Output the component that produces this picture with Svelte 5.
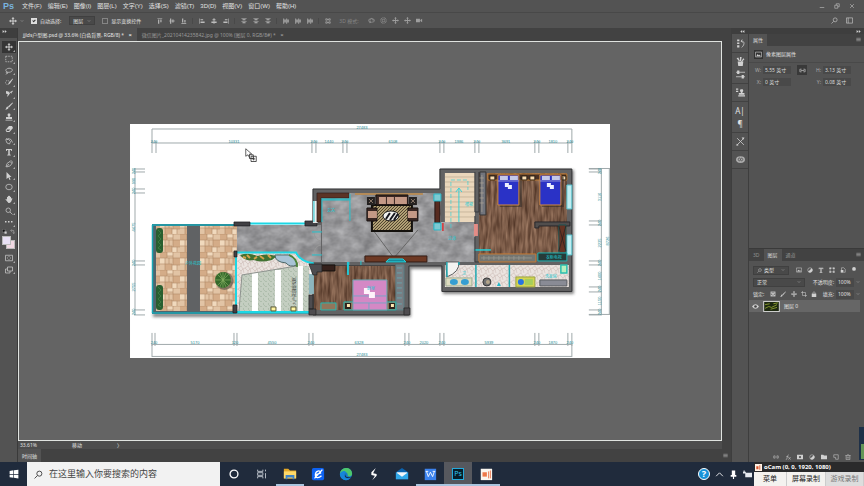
<script lang="ts">
	const menus = ['文件(F)', '编辑(E)', '图像(I)', '图层(L)', '文字(Y)', '选择(S)', '滤镜(T)', '3D(D)', '视图(V)', '窗口(W)', '帮助(H)'];

	// every icon is drawn on a 16 x 16 grid
	const icons: Record<string, string> = {
		move: '<path class="f" d="M8 0l3 3.500H9V7h3.500V5L16 8l-3.500 3V9H9v3.500h2L8 16l-3-3.500h2V9H3.500v2L0 8l3.500-3v2H7V3.500H5z"/>',
		marquee: '<path class="s" stroke-dasharray="3 2" d="M1.500 2.500h13v11h-13z"/>',
		lasso: '<path class="s" d="M4 10C0 8 1 3 8 2.500c7 0 8 4 5 6.500-3 2-7 2-9 1-2 0-2 3 0 3s2-2 0-3M4 13l-2 2"/>',
		quick: '<circle class="s" cx="5" cy="9" r="4" stroke-dasharray="2 1.500"/><path class="f" d="M15 1l1 1-6 9-3 2 0-3z"/>',
		dropper: '<path class="f" d="M2 2l5 1 2 3-3 3-4-2zM15 1c1 2 0 3-2 4l1 1-1 1-2-2-4 6-3 3 1-4 5-5-1-1 1-1 1 1z"/>',
		brush: '<path class="f" d="M15 1l1 1-8 9-2-2zM5 9l2 2c0 3-3 4-7 4 3-1 2-5 5-6z"/>',
		stamp: '<path class="f" d="M6 1h4l1 3-2 4h5v4H2V8h5L5 4zM1 13.500h14V15H1z"/>',
		eraser: '<path class="f" fill-rule="evenodd" d="M8 2h6l2 4-7 8H3l-2-4zM3 10l1 2h4l2-3H4z"/>',
		mixer: '<path class="s" d="M2 4l5 1 4 4-2 5-5-2-2-5zM6 3l6 2 3 6M3 2l3 4"/>',
		type: '<path class="f" d="M2 2h12v4h-1.500L12 4H9.500v9l2 .5V15h-7v-1.500l2-.5V4H4l-.5 2H2z"/>',
		pen: '<path class="s" stroke-width="2" d="M2 14l2-7 6-4 4 4-4 5-7 2 5-6M10 3l2-2 3 3-2 3"/>',
		select: '<path class="f" d="M3 0l10 10H9l2 5-2 1-2-5-4 3z"/>',
		ellipse: '<ellipse class="s" cx="8" cy="8" rx="6.500" ry="5.500"/>',
		hand: '<path class="f" d="M4 9V4q1-1 2 0V2q1-1 2 0v0q1-1 2 0v2q2-1 2 0v3q2-1 3 0l-3 7-3 2H7L1 9q0-2 3 0z"/>',
		zoom: '<circle class="s" cx="6.500" cy="6.500" r="4.500"/><path class="s" stroke-width="2.500" d="M10 10l5 5"/>',
		dots: '<path class="f" d="M0 6h3v3H0zM6 6h3v3H6zM12 6h3v3h-3z"/>',
		mask: '<path class="s" d="M1 2.500h14v11H1z"/><circle class="s" stroke-dasharray="1 1" cx="8" cy="8" r="3"/>',
		screen: '<path class="s" d="M5 2h10v8H5zM5 6H1v8h9v-4"/>',
		alignTop: '<path class="f" d="M1 1h13v1.500H1zM3 4h3v11H3zM9 4h3v7H9z"/>',
		alignMid: '<path class="f" d="M0 7h16v1.500H0zM3 1h3v14H3zM9 4h3v8H9z"/>',
		alignEnd: '<path class="f" d="M1 13.500h13V15H1zM3 1h3v11H3zM9 5h3v7H9z"/>',
		alignLeft: '<path class="f" d="M1 1h1.500v14H1zM4 3h7v3H4zM4 9h11v4H4z"/>',
		alignCol: '<path class="f" d="M7 0h2v16H7zM4 3h8v3H4zM1 9h14v4H1z"/>',
		alignRight: '<path class="f" d="M13.500 1H15v14h-1.500zM5 3h7v3H5zM1 9h11v4H1z"/>',
		distTop: '<path class="f" d="M1 1h14v1.500H1zM4 3h8v3H4zM1 9h14v1.500H1zM4 11h8v3H4z"/>',
		distCol: '<path class="f" d="M1 1h2v14H1zM4 4h3v8H4zM9 1h2v14H9zM12 4h3v8h-3z"/>',
		autoAlign: '<path class="s" stroke-width="2" d="M2 2h4v4H2zM10 2h4v4h-4zM2 10h4v4H2zM10 10h4v4h-4zM6 4h4M6 12h4"/>',
		orbit: '<ellipse class="s" cx="8" cy="8" rx="7" ry="4"/><path class="s" d="M5 12c-3-10 7-12 7-3M3 13l4-1"/>',
		roll: '<circle class="s" cx="8" cy="8" r="6.500" stroke-dasharray="8 2"/><circle class="s" cx="8" cy="8" r="3"/>',
		camera: '<path class="f" d="M0 4h9v8H0zM10 7l4-3v8l-4-3z"/>',
		frame: '<path class="s" d="M1 2h14v12H1zM5 2v12"/>',
		picture: '<path class="s" d="M1 2.500h14v11H1z"/><path class="f" d="M3 12l3-5 3 3 2-2 2 4z"/>',
		history: '<path class="f" d="M2 1h4v3H2zM2 6h4v3H2zM2 11h4v4H2z"/><path class="s" stroke-width="2" d="M9 4h3c4 2 2 8-2 11M11 1L9 4l3 2"/>',
		brushes: '<path class="f" d="M3 8h10l-1 8H4zM1 2l3-1 3 6H5zM7 0h3l-1 7H7zM13 2l2 2-4 4H9z"/>',
		sliders: '<path class="s" stroke-width="2" d="M0 4h16M0 12h16"/><path class="f" d="M2 1h4v6H2zM10 9h4v6h-4z"/>',
		cloneSrc: '<path class="f" d="M0 1h4v2H0zM0 5h4v2H0zM8 2h4l1 3-2 4h4v3H5V9h4L7 5zM4 13h12v2H4z"/>',
		cross: '<path class="s" stroke-width="2.500" d="M2 2l12 12M14 2L2 14"/><path class="f" d="M10 1l5 0-2 4zM1 12l4 2-4 2z"/>',
		cloud: '<ellipse class="f" cx="8" cy="8" rx="8" ry="6" opacity=".7"/><path d="M4 8c0-4 4-3 4 0s4 3 4 0-4-3-4 0-4 3-4 0z" fill="none" stroke="#555" stroke-width="1.500"/>',
		link: '<path class="s" stroke-width="2" d="M6 5H2v6h4M10 5h4v6h-4M4 8h8"/>',
		half: '<circle class="s" cx="8" cy="8" r="6"/><path class="f" d="M12.500 3A6.500 6.500 0 013 12.500z"/>',
		shape: '<path class="s" d="M3 3h10v10H3z"/><path class="f" d="M1 1h4v4H1zM11 1h4v4h-4zM1 11h4v4H1zM11 11h4v4h-4z"/>',
		smart: '<path class="s" stroke-width="2" d="M4 8V2h6l4 4v8H9"/><path class="f" d="M2 8h7v7H2z"/>',
		dot: '<circle class="f" cx="8" cy="5" r="5"/>',
		checker: '<path class="s" d="M2 2h12v12H2z"/><path class="f" d="M3 3h4v4H3zM9 3h4v4H9zM6 6h4v4H6zM3 10h4v3H3zM9 10h4v3H9z"/>',
		crop: '<path class="s" d="M4 0v12h12M0 4h12v12"/>',
		lock: '<path class="s" stroke-width="2" d="M5 8V4q3-4 6 0v4"/><path class="f" d="M2 7h12v9H2z"/>',
		eye: '<path class="f" d="M0 8q8-10 16 0-8 10-16 0z"/><circle cx="8" cy="8" r="3" fill="#444"/>',
		fx: '<path class="s" stroke-width="2" d="M2 15q3 1 4-6t4-7M3 7h6M9 8l6 7M15 8l-6 7"/>',
		maskAdd: '<path class="f" fill-rule="evenodd" d="M0 2h16v12H0zM8 5a3 3 0 100 6 3 3 0 000-6z"/>',
		folder: '<path class="f" d="M0 2h6l2 2h8v10H0z"/>',
		fresh: '<path class="s" d="M2 2h12v12H7V9H2z"/>',
		trash: '<path class="s" d="M1 4h14M3 4v11h10V4M6 1h4M6 7v5M10 7v5"/>',
		swap: '<path class="s" stroke-width="2" d="M3 5h9v8M6 1L2 5l4 4M9 11l3 4 3-4"/>',
		swatches: '<path d="M1 1h9v9H1z" fill="#111" stroke="#ccc"/><path class="f" d="M8 8h7v7H8z"/>',
		chevron: '<path class="s" stroke-width="2" d="M3 5l5 5 5-5"/>',
		menu: '<path class="s" d="M1 4h14M1 8h14M1 12h14"/>',
		rewind: '<path class="f" d="M7 3v10L1 8zM14 3v10L8 8z"/>',
		forward: '<path class="f" d="M2 3l6 5-6 5zM9 3l6 5-6 5z"/>'
	};

	const tools = [
		['移动', 'move'], ['选框', 'marquee'], ['套索', 'lasso'], ['快速选择', 'quick'], ['吸管', 'dropper'], ['画笔', 'brush'],
		['图章', 'stamp'], ['橡皮擦', 'eraser'], ['混合', 'mixer'], ['文字', 'type'], ['钢笔', 'pen'], ['路径选择', 'select'],
		['椭圆', 'ellipse'], ['抓手', 'hand'], ['缩放', 'zoom'], ['更多', 'dots']
	];
	const alignGroups = [
		['alignTop', 'alignMid', 'alignEnd'],
		['alignLeft', 'alignCol', 'alignRight'],
		['distTop', 'distTop', 'distTop'],
		['distCol', 'distCol', 'distCol'],
		['autoAlign']
	];
	const modes = ['orbit', 'roll', 'move', 'move', 'camera'];
	const dock = [['history'], ['brushes', 'sliders'], ['cloneSrc'], ['A|', '¶'], ['cross'], ['cloud']];
	const filters = ['picture', 'half', 'type', 'shape', 'smart', 'dot'];
	const locks = ['checker', 'brush', 'move', 'crop', 'lock'];
	const layerActions = ['link', 'fx', 'maskAdd', 'half', 'folder', 'fresh', 'trash'];

	const apps = [
		{ name: 'Cortana', art: '<circle cx="8" cy="8" r="4.500" fill="none" stroke="#fff" stroke-width="1.500"/>' },
		{ name: '任务视图', art: '<path fill="none" stroke="#c5cbd3" d="M3 3v2h6V3M3 13v-2h6v2M3 6.500h6v3H3zM12 3v2M12 7v6"/>' },
		{ name: '文件资源管理器', open: true, art: '<path fill="#e4a827" d="M1 2h5l2 2h7v9H1z"/><path fill="#ffd968" d="M1 5h14v8H1z"/><path fill="#3f83c6" d="M3 9h10v5h-2v-2H5v2H3z"/>' },
		{ name: '浏览器', art: '<rect x="1" y="1" width="14" height="14" rx="2" fill="#0d62f2"/><path d="M5 9l6-2c0-4-6-3-6 2 0 4 4 4 7 1M4 13l9-10" fill="none" stroke="#fff" stroke-width="1.500"/>' },
		{ name: 'Edge', art: '<circle cx="8" cy="8" r="7" fill="#1679ca"/><path d="M1 8C2-1 15-1 15 8c0 4-6 3-5 1C10 5 3 4 1 8z" fill="#4cc66c"/><path d="M1 8c2-4 6-4 7-2-4 2-2 8 4 8C6 17 1 13 1 8z" fill="#1686d9"/><path d="M8 8c-2 2 1 5 6 3-4 4-10 0-6-3z" fill="#182b48"/>' },
		{ name: '剪映', art: '<path fill="#fff" d="M10 1L5 6l0 3 4 1-3 5 5-5V8L7 7z"/>' },
		{ name: '邮件', art: '<path d="M1 6l7-5 7 5v8H1z" fill="#0b63ae"/><path d="M2 6h12v7H2z" fill="#f4f7fb"/><path d="M1 6l7 5 7-5v8H1z" fill="#31a8ea"/>' },
		{ name: 'WPS', open: true, art: '<rect x="2" y="2" width="13" height="13" fill="#3c83ee"/><path d="M4 5l2 6 2.500-5L11 11l2-6M3 5h3M11 5h3" fill="none" stroke="#fff"/>' },
		{ name: 'Photoshop', open: true, active: true, art: '' },
		{ name: 'oCam', open: true, art: '<path d="M2 2h13v13H2z" fill="#fbf6ef"/><path d="M4 6h5v5H4z" fill="#ee7848"/><path d="M11 5v8M13 4v9" stroke="#e86e43"/>' }
	];

	// dimension chains round the plan
	const topTicks = [152, 156, 312, 316, 343, 347, 440, 444, 475, 479, 535, 539, 568, 572];
	const bottomTicks = [152, 155, 234, 237, 309, 313, 405, 409, 440, 444, 535, 539, 568, 572];
	const leftTicks = [169, 172, 189, 193, 261, 265, 310, 315];
	const rightTicks = [169, 172, 221, 225, 261, 265, 287, 292, 310, 315];
	const topLabels = [[154, '240'], [234, '10331'], [314, '240'], [329, '1440'], [345, '240'], [393, '6108'], [442, '240'], [459, '1986'], [477, '240'], [506, '3691'], [537, '240'], [553, '1810'], [570, '240']];
	const bottomLabels = [[154, '240'], [195, '5170'], [235, '120'], [272, '4550'], [311, '240'], [359, '6328'], [407, '240'], [424, '2020'], [442, '240'], [489, '5939'], [537, '240'], [553, '1870'], [570, '240']];
	const leftLabels = [[171, '240'], [181, '990'], [191, '240'], [227, '4475'], [263, '240'], [287, '2755'], [312, '240']];
	const rightLabels = [[171, '240'], [197, '3116'], [223, '240'], [243, '2235'], [263, '240'], [276, '1400'], [289, '240'], [301, '1150'], [312, '240']];
	const beds = [498, 540];
	const bushes = [228, 285];
	const stairs = [177, 182, 187, 192, 197, 202, 207, 212, 217];

	let autoSelect = $state(true);
	let showControls = $state(false);
	let query = $state('');
</script>

{#snippet icon(name: string)}
	<svg class="icon" viewBox="0 0 16 16" aria-hidden="true">{@html icons[name]}</svg>
{/snippet}

<div class="app">
	<header class="menubar">
		<span class="logo">Ps</span>
		<nav>
			{#each menus as item}
				<button>{item}</button>
			{/each}
		</nav>
		<div class="window-buttons">
			<button aria-label="最小化"><svg class="icon" viewBox="0 0 16 16"><path class="s" stroke-width="2" d="M2 12h12" /></svg></button>
			<button aria-label="还原"><svg class="icon" viewBox="0 0 16 16"><path class="s" stroke-width="2" d="M2 6h8v8H2zM6 6V2h8v8h-4" /></svg></button>
			<button aria-label="关闭"><svg class="icon" viewBox="0 0 16 16"><path class="s" stroke-width="2" d="M3 3l10 10M13 3L3 13" /></svg></button>
		</div>
	</header>

	<div class="options">
		<span class="current">{@render icon('move')}</span>
		<span class="tiny">{@render icon('chevron')}</span>
		<label><input type="checkbox" bind:checked={autoSelect} />自动选择:</label>
		<span class="pick short"><select aria-label="选择对象"><option>图层</option></select>{@render icon('chevron')}</span>
		<label><input type="checkbox" bind:checked={showControls} />显示变换控件</label>
		<div class="groups">
			{#each alignGroups as group}
				<div class="group">
					{#each group as name}
						<button aria-label={name}>{@render icon(name)}</button>
					{/each}
				</div>
			{/each}
		</div>
		<div class="modes">
			<span>3D 模式:</span>
			{#each modes as name}
				<button aria-label={name}>{@render icon(name)}</button>
			{/each}
		</div>
		<div class="options-end">
			<button aria-label="搜索" class="flip">{@render icon('zoom')}</button>
			<button aria-label="工作区">{@render icon('frame')}</button>
		</div>
	</div>

	<main>
		<aside class="toolbar">
			<div class="strip">{@render icon('forward')}</div>
			{#each tools as [label, name], i}
				<button aria-label={label} class:active={i === 0}>{@render icon(name)}</button>
			{/each}
			<div class="mini">{@render icon('swatches')}{@render icon('swap')}</div>
			<div class="colors"><i class="back"></i><i class="front"></i></div>
			<button aria-label="快速蒙版">{@render icon('mask')}</button>
			<button aria-label="屏幕模式">{@render icon('screen')}</button>
		</aside>

		<section class="documents">
			<div class="tabs">
				<button class="tab active">jjlds户型图.psd @ 33.6% (白色背景, RGB/8) * <b>×</b></button>
				<button class="tab">微信图片_20210414235842.jpg @ 100% (图层 0, RGB/8#) * <b>×</b></button>
			</div>
			<div class="canvas">
				<svg class="plan" viewBox="130 124 481 234" role="img" aria-label="户型图">
					<defs>
						<filter id="marble" x="0" y="0" width="100%" height="100%" color-interpolation-filters="sRGB">
							<feTurbulence type="fractalNoise" baseFrequency=".08 .11" numOctaves="3" seed="4" />
							<feColorMatrix values=".3 0 0 0 .44 .3 0 0 0 .44 .3 0 0 0 .45 0 0 0 0 1" />
							<feComposite in2="SourceGraphic" operator="in" />
						</filter>
						<filter id="wood" x="0" y="0" width="100%" height="100%" color-interpolation-filters="sRGB">
							<feTurbulence type="fractalNoise" baseFrequency=".35 .06" numOctaves="2" seed="9" />
							<feColorMatrix values=".45 0 0 0 .25 .4 0 0 0 .15 .35 0 0 0 .1 0 0 0 0 1" />
							<feComposite in2="SourceGraphic" operator="in" />
						</filter>
						<filter id="soft"><feGaussianBlur stdDeviation="1.500" /></filter>
						<pattern id="tile" width="20" height="18" patternUnits="userSpaceOnUse">
							<path d="M0 0h20v18H0z" fill="#e2c4a5" />
							<path d="M0 0h7v6H0zM13 6h7v7h-7zM5 12h7v6H5z" fill="#d4ac88" />
							<path d="M7 0h6v4H7zM0 6h5v6H0zM12 13h5v5h-5z" fill="#f0d9bd" />
							<path d="M0 0h20M0 6h13M7 0v6M13 0v13M0 12h12M5 6v12M12 12v6M13 6h7M12 13h8M7 4h6M17 13v5M9 6v6" fill="none" stroke="#ad8564" stroke-width=".6" />
						</pattern>
						<pattern id="pebble" width="7" height="7" patternUnits="userSpaceOnUse">
							<path d="M0 0h7v7H0z" fill="#ebe4e0" />
							<path d="M0 2l3-2 2 3-2 2-3-3M5 3l2-1M3 5v2M5 3l1 4" fill="none" stroke="#c3aea8" stroke-width=".5" />
						</pattern>
						<pattern id="grass" width="5" height="5" patternUnits="userSpaceOnUse">
							<path d="M0 0h5v5H0z" fill="#c4cec1" />
							<path d="M0 1h2v1H0zM3 3h1v2H3zM4 0h1v1H4z" fill="#adbcab" />
						</pattern>
						<pattern id="woven" width="3" height="3" patternUnits="userSpaceOnUse">
							<path d="M0 0h3v3H0z" fill="#b6a578" />
							<path d="M0 0h1v1H0zM2 1h1v1H2zM1 2h1v1H1z" fill="#483b28" />
						</pattern>
					</defs>

					<path d="M130 124h481v234H130z" fill="#fff" />

					<g class="dim">
						<path d="M152 129h420M152 143h420M152 344.500h420M152 356.500h420M135 168v147M601.500 168v147M609.500 168v147M152 129v14M572 129v14M152 344v13M572 344v13M589 168.500h21M589 314.500h21" />
						{#each topTicks as x}<path d="M{x} 141v12" />{/each}
						{#each bottomTicks as x}<path d="M{x} 333v13" />{/each}
						{#each leftTicks as y}<path d="M134 {y}h11" />{/each}
						{#each rightTicks as y}<path d="M589 {y}h13" />{/each}
					</g>
					<g class="num">
						<text x="362" y="129">27483</text>
						<text x="362" y="356">27483</text>
						{#each topLabels as [x, t]}<text {x} y="143">{t}</text>{/each}
						{#each bottomLabels as [x, t]}<text {x} y="344">{t}</text>{/each}
						{#each leftLabels as [y, t]}<text transform="translate(135 {y}) rotate(-90)">{t}</text>{/each}
						{#each rightLabels as [y, t]}<text transform="translate(601 {y}) rotate(-90)">{t}</text>{/each}
						<text transform="translate(609 241) rotate(-90)">8726</text>
					</g>

					<!-- walls -->
					<path d="M315 191h127v-21h132v124H443v-25h-32v48H153v-4h160z" fill="#333" opacity=".6" filter="url(#soft)" />
					<path d="M313 189h127v-20h132v122.500H442V266h-33v49h-96z" fill="#626263" stroke="#303133" />

					<!-- garden -->
					<path d="M152 224h84v90h-84z" fill="#50656d" />
					<path d="M156 226h81v85h-81z" fill="url(#tile)" />
					<path d="M187 225h13v86h-13z" fill="#606264" />
					<path d="M152.500 225v88M152 225h98M152 313h161" fill="none" stroke="#18a7b5" stroke-width="1.500" />
					{#each bushes as y}
						<rect x="156" {y} width="7" height="25" rx="3" fill="#285f30" />
						<path d="M158 {y + 2}l3 3-3 3 3 3-3 3 3 3-3 3 3 2" fill="none" stroke="#47894a" stroke-width=".7" />
					{/each}
					<circle cx="224.500" cy="281" r="9" fill="#39403b" opacity=".5" />
					<circle cx="223" cy="280" r="8" fill="#35692b" />
					<path d="M223 272v16M215 280h16M217 274l12 12M229 274l-12 12M220 273l6 14M226 273l-6 14" stroke="#82ae60" stroke-width=".7" />
					<text class="tag" x="193" y="265">户外花园</text>

					<!-- corridor and courtyard -->
					<path d="M237 225h84v37h-7l-5 2-9-6-4-5h-59z" filter="url(#marble)" />
					<path d="M237 253h59l5 7 9 4v48h-73z" fill="url(#pebble)" />
					<path d="M242 275l55-9h12v45h-70z" fill="url(#grass)" />
					<path d="M252 273h6v38h-6zM275 270h6v41h-6zM298 266h5v45h-5z" fill="#fff" />
					<path d="M239 311l3-36 55-9" fill="none" stroke="#8e938f" />
					<path d="M240 255q9-3 17 1 9-3 20 0l-5 4q-13 3-18 0-9 2-14-5z" fill="#417232" />
					<path d="M247 255l3 3M260 256l4 3M243 257l3 1M254 259l3-2M268 255l3 3" stroke="#d4a14b" stroke-width="2" />
					<path d="M275 255h14q8 4 8 10-7 3-11-2-11-1-11-8z" fill="#a8c3d6" stroke="#4d6768" />
					<path d="M289 255q9 4 8 12" fill="none" stroke="#4e833b" stroke-width="2" />
					<path d="M236 252v60h75M235 252.500h61q4 9 18 11M250 223.500h55" fill="none" stroke="#1bd7e5" stroke-width="2" />
					<path d="M234 222h16v4h-16zM305 221h12v5h-12zM233 305h4v8h-4zM234 251h3v6h-3z" fill="#414044" stroke="#1d1d1f" stroke-width=".7" />
					<path d="M271 307h5v4h-5zM291 307h5v4h-5z" fill="#fff4a0" stroke="#595834" />
					<text class="note" transform="translate(296 291) rotate(-90)">入户花园景观区</text>

					<!-- hall -->
					<path d="M322 193h119v69H322z" filter="url(#marble)" />
					<path d="M445 222h30v40h-38v-40z" filter="url(#marble)" />
					<path d="M313 201h5v22h-5z" fill="#edf0ef" />
					<path d="M321 231h-7q0 9 7 10M321 255h-7q0-9 7-10" fill="none" stroke="#999" />
					<path d="M317 193h32v5h-28v24h-4z" fill="#5b3426" stroke="#2b1a17" stroke-width=".6" />
					<path d="M314 201v21M350 194v27M321 199h29v1h-28v22M312 232h10M312 255h10M349 262v14M361 261v5" fill="none" stroke="#21c3ce" />
					<path d="M355 193h68v2h-68z" fill="#b48b58" />
					<path d="M373 230l21 28 24-28" fill="none" stroke="#666" />
					<path d="M372 205h40v26h-40z" fill="url(#woven)" stroke="#14110d" stroke-width="2" />
					<path d="M376 195h32v10h-32zM367 208h10v13h-10zM408 208h10v13h-10z" fill="#392723" stroke="#17110f" />
					<path d="M379 197h7v7h-7zM387 197h7v7h-7zM395 197h7v7h-7zM402 197h5v7h-5zM368 211h9v7h-9zM408 211h9v7h-9z" fill="#c49986" />
					<path d="M367 197h8v8h-8zM409 197h8v8h-8z" fill="#242120" />
					<path d="M369 199l4 4M373 199l-4 4M411 199l4 4M415 199l-4 4" stroke="#8f7b6c" />
					<ellipse cx="391" cy="216" rx="8" ry="5" fill="#f1f1ee" stroke="#141414" />
					<path d="M386 219l4-6M390 220l5-7M394 220l4-6" stroke="#15151d" stroke-width="2" />
					<path d="M365 256h62v6h-62z" fill="#6d3924" stroke="#331c15" />
					<path d="M386 262l3-3h14l3 3z" fill="#17899a" stroke="#26d4df" />
					<path d="M435 201h5v22h-5z" fill="#572b20" stroke="#241411" />
					<path d="M434 194h7v7h-7zM434 223h7v7h-7z" fill="#7ccad3" stroke="#27b7c7" />
					<text class="tag" x="331" y="212">玄关</text>
					<text class="tag" x="452" y="240">过道</text>

					<!-- lower bedroom -->
					<path d="M313 265h91v45h-91z" fill="#454444" />
					<path d="M314 266h82v44h-82z" filter="url(#wood)" />
					<path d="M309 274h5v20h-5z" fill="#8db5bd" />
					<path d="M317 265h18v6h-18z" fill="#35211c" stroke="#15100e" />
					<path d="M396 265h8v45h-8z" fill="#777d82" stroke="#5b8288" />
					<path d="M397 268h5M397 273h5M397 278h5M397 283h5M397 288h5M397 293h5M397 298h5M397 304h5" stroke="#6aa4ac" />
					<path d="M344 302h52v8h-52zM321 303h15v7h-15z" fill="#92765b" stroke="#23b8b1" />
					<path d="M345 303h6v6h-6zM389 303h6v6h-6z" fill="#2c211a" />
					<path d="M347 304h3v3h-3zM391 304h3v3h-3z" fill="#ffe9b1" />
					<path d="M353 280h34v30h-34z" fill="#d488c5" stroke="#6aa6b0" />
					<path d="M353 296h34M369 303v7M353 303h34" stroke="#79a4c5" />
					<path d="M364 288h6v6h-6zM369 292h6v6h-6z" fill="#fff2fb" />
					<path d="M348 262v13" stroke="#20c9d7" stroke-width="2" />
					<text class="tag" x="371" y="290">卧室</text>
					<path d="M309 264h13v8h-5v3h-4zM309 295h4v14h-4zM309 309h7v6h-7zM404 308h6v7h-6z" fill="#4e4c4f" stroke="#222" stroke-width=".7" />

					<!-- stairs -->
					<path d="M445 173h30v49h-30z" fill="#ead7bc" />
					{#each stairs as y}<path d="M445 {y}h30" stroke="#b3a388" stroke-width=".6" />{/each}
					<path d="M451 228v-48h17v10" fill="none" stroke="#36d0d6" stroke-width=".7" stroke-dasharray="4 2" />
					<path d="M459 222v-33M456 192l3-4 3 4" fill="none" stroke="#36d0d6" />
					<text class="tag" x="469" y="206">楼梯</text>

					<!-- upper bedroom -->
					<path d="M479 173h88v81h-88z" filter="url(#wood)" />
					<path d="M480 172h6v43h-6z" fill="#71747c" stroke="#333" />
					<path d="M482 175v37M479 178h5M479 183h5M479 188h5M479 193h5M479 198h5M479 203h5" stroke="#b4a999" stroke-width=".6" />
					<path d="M488 174h79v6h-79z" fill="#493125" stroke="#bf7c33" />
					<path d="M490 176h5v4h-5zM522 176h5v4h-5zM530 176h5v4h-5zM562 176h4v4h-4z" fill="#f7dbb0" stroke="#2b2017" />
					{#each beds as x}
						<path d="M{x} 175h22v30h-22z" fill="#222" opacity=".5" transform="translate(2 2)" />
						<path d="M{x} 175h21v30h-21z" fill="#2a32c6" stroke="#d28a3d" />
						<path d="M{x + 2} 176h8v4h-8zM{x + 12} 176h8v4h-8z" fill="#c4c7e8" />
						<path d="M{x + 7} 183h4v4h-4zM{x + 10} 185h4v4h-4z" fill="#edf0ff" />
						<path d="M{x} 181h21" stroke="#9597d6" />
					{/each}
					<path d="M567 185h5v24h-5zM567 235h5v20h-5z" fill="#c0edf1" stroke="#55c0cb" />
					<path d="M535 222h35v4h-31v2h-4z" fill="#514e4d" stroke="#29282b" />
					<path d="M559 225h7v28h-7z" fill="#653323" stroke="#1c5354" />
					<path d="M559 226l7 25M566 226l-7 25" stroke="#1c1d1c" stroke-width=".6" />
					<path d="M479 254h57v8h-57z" fill="#747672" stroke="#c77933" />
					<path d="M481 258h51M484 256v4M489 256v4M494 256v4M499 256v4M504 256v4M509 256v4M514 256v4M519 256v4M524 256v4" stroke="#9d9d95" stroke-width=".7" />
					<path d="M538 253h29v8h-29z" fill="#263b39" stroke="#20b4b1" />
					<text class="tag" x="554" y="259">衣柜电视</text>
					<path d="M474 224h4v12h-4z" fill="#e38c86" />
					<path d="M474 250h17" stroke="#23d0d8" stroke-width="1.500" />
					<path d="M443 223v8" stroke="#db3236" stroke-width="1.500" />
					<path d="M475 172v40h4v-40M475 216v8M475 237v25h4" fill="none" stroke="#37393c" />

					<!-- bathrooms and balcony -->
					<path d="M445 265h124v22H445z" fill="url(#pebble)" />
					<path d="M446 262h13q1 10-12 15z" fill="#f3f3f1" stroke="#58595b" />
					<path d="M447 262v15M476 265v22M509.500 265v22M459 262v3" stroke="#20a8b1" stroke-width="1.500" />
					<path d="M446 278h26v8h-26z" fill="#dedcc0" stroke="#a1af94" />
					<ellipse cx="454" cy="282" rx="4" ry="3" fill="#369ed1" />
					<ellipse cx="465" cy="282" rx="4" ry="3" fill="#369ed1" />
					<circle cx="487" cy="282" r="4" fill="#737373" stroke="#373737" />
					<circle cx="488" cy="282" r="2" fill="#b4a58b" />
					<path d="M497 286l2-4 2 4z" fill="#22b8ca" />
					<path d="M516 277h19v10h-19z" fill="#d3d550" stroke="#9ca446" />
					<circle cx="521" cy="282" r="3" fill="#2774e2" />
					<path d="M525 279h8v6h-8z" fill="#a6ce5c" />
					<path d="M540 280h27v6h-27z" fill="#898b95" stroke="#585b61" />
					<path d="M561 265h6v8h-6z" fill="#b8efbf" stroke="#2bbfae" stroke-width="1.500" />
					<text class="tag" x="464" y="275">卫</text>
					<text class="tag" x="551" y="278">洗衣房</text>
				</svg>
				<svg class="cursor" viewBox="0 0 16 20" aria-hidden="true">
					<path d="M1 1v10l3-2 2 4 2-1-2-4h3z" fill="#fff" stroke="#333" />
					<path d="M6 9h5v5H6zM8 11h7v7H8z" fill="#fff" stroke="#222" />
					<path d="M11.500 12.500v4M9.500 14.500h4" stroke="#222" />
				</svg>
			</div>
			<div class="status"><span>33.61%</span><span>移动</span><b>〉</b></div>
			<div class="timeline"><button>时间轴</button>{@render icon('menu')}</div>
		</section>

		<aside class="dock">
			<div class="strip">{@render icon('rewind')}</div>
			{#each dock as group}
				<div class="dock-group">
					{#each group as name}
						<button aria-label={name}>
							{#if icons[name]}{@render icon(name)}{:else}{name}{/if}
						</button>
					{/each}
				</div>
			{/each}
		</aside>

		<aside class="panels">
			<div class="strip">{@render icon('forward')}</div>
			<section class="properties">
				<div class="panel-tabs"><button class="active">属性</button>{@render icon('menu')}</div>
				<h2><span class="kind">{@render icon('picture')}</span>像素图层属性</h2>
				<div class="sizes">
					<label>W:<input value="5.55 英寸" /></label>
					<button aria-label="链接宽高" class="chain">{@render icon('link')}</button>
					<label>H:<input value="3.13 英寸" /></label>
					<label>X:<input value="0 英寸" /></label>
					<i></i>
					<label>Y:<input value="0.08 英寸" /></label>
				</div>
			</section>
			<section class="layers">
				<div class="panel-tabs"><button>3D</button><button class="active">图层</button><button>通道</button>{@render icon('menu')}</div>
				<div class="row">
					<span class="pick kinds"><span class="flip">{@render icon('zoom')}</span><select aria-label="筛选"><option>类型</option></select>{@render icon('chevron')}</span>
					<div class="spread">
						{#each filters as name}
							<button aria-label={name}>{@render icon(name)}</button>
						{/each}
					</div>
				</div>
				<div class="row">
					<span class="pick blend"><select aria-label="混合模式"><option>正常</option></select>{@render icon('chevron')}</span>
					<label class="percent">不透明度:<input value="100%" />{@render icon('chevron')}</label>
				</div>
				<div class="row">
					<span>锁定:</span>
					<div class="spread">
						{#each locks as name}
							<button aria-label={name}>{@render icon(name)}</button>
						{/each}
					</div>
					<label class="percent">填充:<input value="100%" />{@render icon('chevron')}</label>
				</div>
				<div class="layer">
					<button aria-label="图层可见性">{@render icon('eye')}</button>
					<svg class="thumb" viewBox="0 0 18 12" aria-hidden="true">
						<path d="M0 0h18v12H0z" fill="#ddd" />
						<path d="M1 1h16v10H1z" fill="#1d2811" />
						<path d="M2 8l4-2 3 1 6-3M8 9l7-2M2 4l5-1M11 3l5-1" stroke="#8b9e2f" stroke-width="1" fill="none" />
					</svg>
					<span>图层 0</span>
				</div>
				<div class="actions">
					{#each layerActions as name}
						<button aria-label={name}>{@render icon(name)}</button>
					{/each}
				</div>
			</section>
		</aside>
	</main>

	<footer>
		<button class="start" aria-label="开始"><svg viewBox="0 0 16 16"><path fill="#fff" d="M1 3l6-1v6H1zM8 2l7-1v7H8zM1 9h6v5l-6-1zM8 9h7v6l-7-1z" /></svg></button>
		<label class="search"><span class="flip">{@render icon('zoom')}</span><input aria-label="搜索" placeholder="在这里输入你要搜索的内容" bind:value={query} /></label>
		{#each apps as app}
			<button class="task" class:open={app.open} class:active={app.active} aria-label={app.name}>
				{#if app.active}
					<span class="ps">Ps</span>
				{:else}
					<svg viewBox="0 0 16 16">{@html app.art}</svg>
				{/if}
			</button>
		{/each}
		<div class="tray">
			<span class="help">?</span>
			<svg viewBox="0 0 16 16"><path d="M2 11l6-6 6 6" fill="none" stroke="#fff" stroke-width="1.500" /></svg>
			<svg viewBox="0 0 16 16"><path fill="#fff" d="M5 1h6v9H5zM3 9h10v3H3zM7 12h2v4H7z" /></svg>
			<svg viewBox="0 0 16 16"><path fill="#e6eaf0" d="M4 5h12v8H4zM1 1h2v2h2v3H0V3h1z" /></svg>
		</div>
	</footer>

	<div class="meter"><i></i></div>
	<section class="ocam">
		<h3><svg viewBox="0 0 16 16"><path d="M0 0h16v16H0z" fill="#fff3e7" /><path d="M3 5h5v7H3zM10 3h2v10h-2z" fill="#d8552d" /></svg>oCam (0, 0, 1920, 1080)</h3>
		<div><button>菜单</button><button>屏幕录制</button><button>游戏录制</button></div>
	</section>
</div>

<style>
	:global(body) {
		margin: 0;
		background: #535353;
	}
	.app {
		position: relative;
		display: flex;
		flex-direction: column;
		height: 100vh;
		overflow: hidden;
		background: #535353;
		color: #e2e2e2;
		font: 6px/8px "Noto Sans", "Noto Sans CJK SC", sans-serif;
		white-space: nowrap;
	}
	button,
	input,
	select {
		font: inherit;
		color: inherit;
		background: none;
		border: 0;
		border-radius: 0;
		padding: 0;
		margin: 0;
		outline: 0;
		min-width: 0;
	}
	button {
		display: flex;
		align-items: center;
		justify-content: center;
		flex: none;
	}
	select {
		appearance: none;
		flex: 1;
	}
	.icon {
		display: block;
		flex: none;
		width: 7px;
		height: 7px;
	}
	.app :global(.f) {
		fill: #d0d0d0;
	}
	.app :global(.s) {
		fill: none;
		stroke: #c8c8c8;
		stroke-width: 1.5px;
	}
	.flip {
		transform: scaleX(-1);
	}

	.menubar {
		display: flex;
		align-items: center;
		height: 13px;
		flex: none;
		border-bottom: 1px solid #484848;
		box-sizing: border-box;
		font-family: "Liberation Sans", "Noto Sans CJK SC", sans-serif;
	}
	.logo {
		width: 22px;
		padding-left: 3px;
		box-sizing: border-box;
		font-size: 9px;
		font-weight: bold;
		color: #79b4df;
	}
	nav {
		display: flex;
		gap: 6px;
	}
	.window-buttons {
		display: flex;
		gap: 9px;
		margin-left: auto;
		padding-right: 9px;
	}
	.window-buttons .icon {
		width: 6px;
		height: 6px;
	}

	.options {
		display: flex;
		align-items: center;
		height: 15px;
		flex: none;
		padding-left: 9px;
		font-size: 5px;
	}
	.current .icon {
		width: 8px;
		height: 8px;
	}
	.tiny {
		margin: 0 7px 0 3px;
	}
	.tiny .icon,
	.pick > .icon,
	.percent .icon {
		width: 4px;
		height: 4px;
	}
	label {
		display: flex;
		align-items: center;
	}
	.options label {
		gap: 3px;
	}
	input[type="checkbox"] {
		appearance: none;
		width: 6px;
		height: 6px;
		border: 1px solid #858585;
		position: relative;
		box-sizing: border-box;
	}
	input[type="checkbox"]:checked {
		background: #ddd;
		border-color: #ddd;
	}
	input[type="checkbox"]:checked::after {
		content: "";
		position: absolute;
		left: 1px;
		top: 0;
		width: 1px;
		height: 2px;
		border: solid #333;
		border-width: 0 1px 1px 0;
		transform: rotate(45deg);
	}
	.pick {
		display: flex;
		align-items: center;
		height: 9px;
		padding: 0 3px;
		box-sizing: border-box;
		background: #494949;
		border: 1px solid #404040;
	}
	.short {
		width: 26px;
		margin: 0 7px 0 8px;
	}
	.groups {
		display: flex;
		margin-left: 15px;
	}
	.group {
		display: flex;
		gap: 5px;
		padding: 0 5px;
	}
	.group + .group {
		border-left: 1px solid #494949;
	}
	.group:first-child {
		padding-left: 0;
	}
	.group:last-child {
		padding-right: 8px;
	}
	.group .icon {
		width: 6px;
		height: 6px;
		margin-left: 1px;
		opacity: 0.85;
	}
	.modes {
		display: flex;
		align-items: center;
		gap: 5px;
		color: #858585;
	}
	.modes span {
		margin-right: 4px;
	}
	.modes .icon {
		opacity: 0.6;
	}
	.options-end {
		display: flex;
		gap: 8px;
		margin-left: auto;
		padding-right: 11px;
	}

	main {
		display: flex;
		flex: 1;
		min-height: 0;
	}
	.strip {
		display: flex;
		justify-content: flex-end;
		align-items: center;
		height: 6px;
		flex: none;
		padding-right: 3px;
		background: #3e3e3e;
	}
	.strip .icon {
		width: 5px;
		height: 5px;
	}
	.toolbar {
		display: flex;
		flex-direction: column;
		align-items: center;
		width: 18px;
		flex: none;
		border-right: 1px solid #3a3a3a;
		box-sizing: border-box;
	}
	.toolbar .strip {
		align-self: stretch;
		justify-content: flex-start;
		padding-left: 2px;
		padding-bottom: 4px;
		margin-bottom: 3px;
	}
	.toolbar button {
		position: relative;
		width: 14px;
		height: 12px;
	}
	.toolbar button:nth-of-type(3n) {
		height: 11px;
	}
	.toolbar button.active {
		background: #353535;
	}
	.toolbar button::after {
		content: "";
		position: absolute;
		right: 1px;
		bottom: 1px;
		border: 1px solid transparent;
		border-right-color: #aaa;
		border-bottom-color: #aaa;
	}
	.toolbar button .icon {
		width: 8px;
		height: 8px;
	}
	.mini {
		display: flex;
		gap: 3px;
		margin-top: 1px;
	}
	.mini .icon {
		width: 5px;
		height: 5px;
	}
	.colors {
		position: relative;
		width: 13px;
		height: 13px;
		margin: 2px 0 3px;
	}
	.colors i {
		position: absolute;
		width: 9px;
		height: 9px;
		box-sizing: border-box;
		border: 1px solid #bbb;
	}
	.back {
		right: 0;
		bottom: 0;
		background: #f0d8e2;
	}
	.front {
		left: 0;
		top: 0;
		background: #e8e0f4;
	}

	.documents {
		display: flex;
		flex-direction: column;
		flex: 1;
		min-width: 0;
		background: #424242;
	}
	.tabs {
		display: flex;
		height: 13px;
		flex: none;
	}
	.tab {
		padding: 0 5px;
		font-size: 5px;
		color: #9a9a9a;
		white-space: pre;
	}
	.tab.active {
		background: #535353;
		color: #e6e6e6;
	}
	.tab b {
		font-size: 6px;
		padding-left: 3px;
	}
	.canvas {
		position: relative;
		display: flex;
		align-items: center;
		justify-content: center;
		flex: 1;
		min-height: 0;
		margin-right: 9px;
		border: 1px solid #e0e3e0;
		background: #646464;
	}
	.plan {
		display: block;
		width: 68.5%;
		height: auto;
	}
	.cursor {
		position: absolute;
		left: 32.2%;
		top: 26.6%;
		width: 12px;
		height: 15px;
	}
	.dim path {
		fill: none;
		stroke: #a0a9ab;
		stroke-width: 1;
	}
	.num text {
		fill: #288d96;
		font-family: "Liberation Sans", sans-serif;
		font-size: 4px;
		text-anchor: middle;
	}
	.tag {
		fill: #20cbd5;
		font-size: 4px;
		text-anchor: middle;
	}
	.note {
		fill: #333;
		font-size: 4px;
		text-anchor: middle;
	}
	.status {
		display: flex;
		align-items: center;
		height: 8px;
		flex: none;
		padding-left: 2px;
		margin-right: 9px;
		background: #4d4d4d;
		font-size: 5px;
	}
	.status span {
		width: 52px;
	}
	.status b {
		font-weight: normal;
		margin-left: -7px;
	}
	.timeline {
		display: flex;
		align-items: center;
		justify-content: space-between;
		height: 13px;
		flex: none;
		padding-right: 3px;
		font-size: 5px;
	}
	.timeline button {
		align-self: stretch;
		padding: 0 4px;
		background: #535353;
	}
	.timeline .icon,
	.panel-tabs .icon {
		width: 5px;
		height: 5px;
	}

	.dock {
		width: 18px;
		flex: none;
		border: solid #3e3e3e;
		border-width: 0 1px;
		box-sizing: border-box;
	}
	.dock .strip {
		margin-bottom: 1px;
	}
	.dock-group {
		display: flex;
		flex-direction: column;
		align-items: center;
		gap: 4px;
		padding: 4px 0;
		border-bottom: 1px solid #424242;
	}
	.dock-group button {
		height: 9px;
		font-size: 8px;
	}
	.dock-group .icon {
		width: 9px;
		height: 9px;
	}

	.panels {
		display: flex;
		flex-direction: column;
		width: 115px;
		flex: none;
		font-size: 5px;
	}
	.properties {
		height: 215px;
		flex: none;
		border-bottom: 1px solid #3a3a3a;
		box-sizing: border-box;
	}
	.panel-tabs {
		display: flex;
		align-items: stretch;
		height: 12px;
		flex: none;
		background: #424242;
		color: #929292;
	}
	.panel-tabs button {
		padding: 0 4px;
	}
	.panel-tabs button.active {
		background: #535353;
		color: #ddd;
	}
	.panel-tabs .icon {
		margin: 3px 3px 0 auto;
	}
	h2 {
		display: flex;
		align-items: center;
		gap: 3px;
		height: 16px;
		margin: 0;
		padding-left: 5px;
		font-size: 5px;
		font-weight: normal;
		border-bottom: 1px solid #494949;
	}
	.kind {
		padding: 1px;
		background: #333;
	}
	.sizes {
		display: grid;
		grid-template-columns: 38px 10px 38px;
		column-gap: 6px;
		row-gap: 3px;
		align-items: center;
		padding: 2px 0 0 4px;
	}
	.sizes label {
		gap: 2px;
		justify-content: flex-end;
		color: #aaa;
	}
	.sizes input {
		width: 28px;
		height: 8px;
		padding-left: 2px;
		box-sizing: border-box;
		background: #494949;
		color: #ddd;
	}
	.chain {
		height: 10px;
		background: #393939;
	}
	.layers {
		display: flex;
		flex-direction: column;
		flex: 1;
		min-height: 0;
	}
	.row {
		display: flex;
		align-items: center;
		gap: 4px;
		height: 12px;
		padding: 0 4px;
	}
	.layers .panel-tabs + .row {
		padding-top: 3px;
	}
	.kinds {
		width: 36px;
		gap: 2px;
	}
	.kinds .flip .icon {
		width: 5px;
		height: 5px;
	}
	.blend {
		width: 52px;
	}
	.spread {
		display: flex;
		flex: 1;
		justify-content: space-around;
	}
	.spread .icon {
		width: 6px;
		height: 6px;
	}
	.percent {
		gap: 2px;
		margin-left: auto;
	}
	.percent input {
		width: 18px;
		height: 9px;
		padding-left: 2px;
		box-sizing: border-box;
		background: #494949;
	}
	.layer {
		display: flex;
		align-items: center;
		gap: 4px;
		height: 12px;
		padding-left: 3px;
		margin-right: 4px;
		background: #666;
	}
	.thumb {
		width: 17px;
		height: 11px;
	}
	.actions {
		display: flex;
		justify-content: flex-end;
		gap: 6px;
		margin-top: auto;
		padding: 0 13px 2px 0;
	}
	.actions .icon {
		width: 6px;
		height: 6px;
	}

	footer {
		display: flex;
		height: 24px;
		flex: none;
		background: #202b3c;
	}
	footer svg {
		width: 14px;
		height: 14px;
	}
	.start {
		width: 27px;
	}
	.start svg {
		width: 10px;
		height: 10px;
	}
	.search {
		width: 193px;
		gap: 6px;
		padding-left: 7px;
		box-sizing: border-box;
		background: #f2f2f2;
	}
	.search .icon {
		width: 9px;
		height: 9px;
	}
	.search :global(.s) {
		stroke: #333;
		stroke-width: 1.5px;
	}
	.search input {
		flex: 1;
		font-size: 9px;
		line-height: 12px;
		color: #333;
	}
	.search input::placeholder {
		color: #444;
		opacity: 1;
	}
	.task {
		width: 28px;
		padding-top: 2px;
		border-bottom: 2px solid transparent;
		box-sizing: border-box;
	}
	.task.open {
		border-bottom-color: #a9c5df;
	}
	.task.active {
		background: #56585e;
		background-clip: padding-box;
	}
	.ps {
		width: 12px;
		height: 12px;
		box-sizing: border-box;
		border: 1px solid #24a9dc;
		background: #061e2a;
		color: #31c5f0;
		font-size: 7px;
		line-height: 10px;
	}
	.tray {
		display: flex;
		align-items: center;
		gap: 5px;
		margin-left: auto;
		padding-right: 112px;
	}
	.tray svg {
		width: 9px;
		height: 9px;
	}
	.help {
		width: 10px;
		height: 10px;
		border: 1px solid #fff;
		border-radius: 50%;
		background: #1692d9;
		color: #fff;
		font-size: 9px;
		font-weight: bold;
		line-height: 10px;
		text-align: center;
	}

	.meter {
		position: absolute;
		right: 0;
		bottom: 26px;
		width: 5px;
		height: 33px;
		background: #1e3048;
	}
	.meter i {
		position: absolute;
		right: 0;
		bottom: 1px;
		width: 3px;
		height: 15px;
		background: #659557;
	}
	.ocam {
		position: absolute;
		right: 0;
		bottom: 0;
		width: 110px;
		overflow: hidden;
		background: #2a2a2b;
		color: #fff;
	}
	.ocam h3 {
		display: flex;
		align-items: center;
		gap: 2px;
		height: 10px;
		margin: 0;
		padding-left: 1px;
		font: bold 6px/8px "Open Sans", sans-serif;
	}
	.ocam svg {
		width: 7px;
		height: 7px;
	}
	.ocam div {
		display: flex;
		height: 14px;
		background: #f4f2ef;
		color: #222;
		font-size: 7px;
	}
	.ocam button {
		padding: 0 5px;
		border-right: 1px solid #ccc;
	}
	.ocam button:first-child {
		padding: 0 9px;
	}
	.ocam button:last-child {
		flex: 1;
		background: #ddd;
		color: #777;
	}
</style>
